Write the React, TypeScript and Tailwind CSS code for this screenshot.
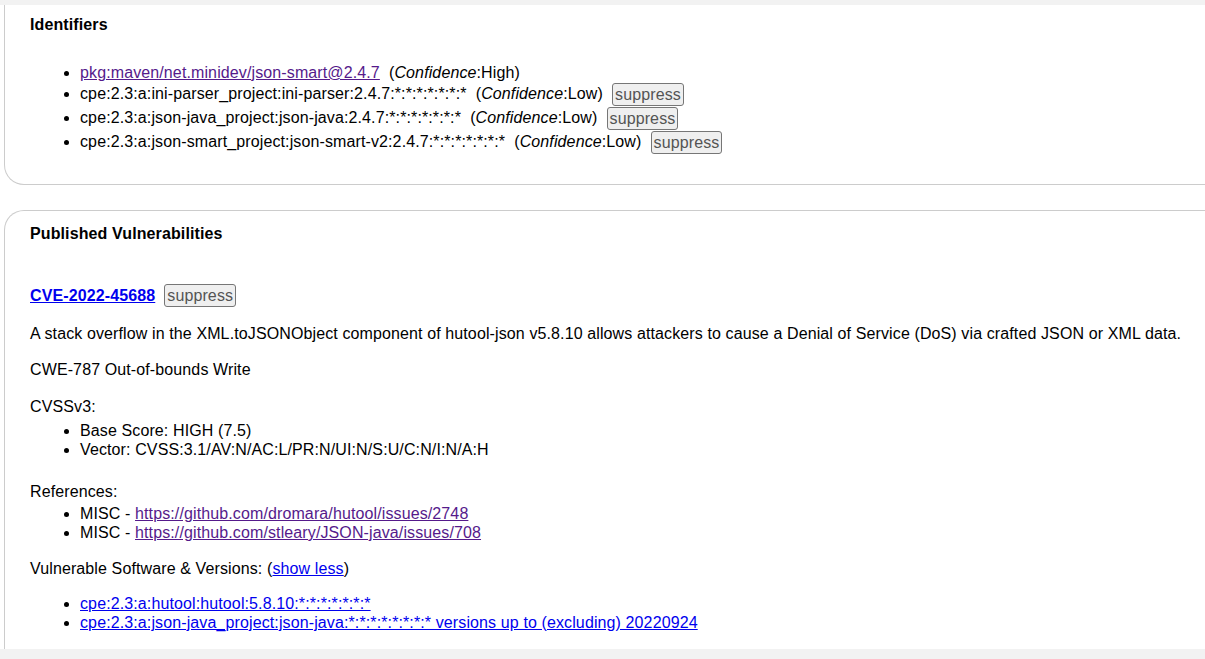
import React from 'react';

const VISITED = 'text-[#551a8b] underline';
const LINK = 'text-[#0000ee] underline';

function Suppress() {
  return (
    <button
      type="button"
      className="align-middle leading-[19px] px-[2px] py-[1px] border border-[#767676] rounded-[3px] bg-[#efefef] text-[#545454] text-[16px] tracking-[0.115px]"
    >
      suppress
    </button>
  );
}

const identifiers = [
  { text: 'cpe:2.3:a:ini-parser_project:ini-parser:2.4.7:*:*:*:*:*:*:*' },
  { text: 'cpe:2.3:a:json-java_project:json-java:2.4.7:*:*:*:*:*:*:*' },
  { text: 'cpe:2.3:a:json-smart_project:json-smart-v2:2.4.7:*:*:*:*:*:*:*' },
];

export default function App() {
  return (
    <div
      className="h-[659px] flex flex-col overflow-hidden bg-white text-black text-[16px] leading-[19px] tracking-[0.115px]"
      style={{ fontFamily: '"Liberation Sans", Arial, sans-serif' }}
    >
      <div className="h-[5px] shrink-0 bg-[#f2f2f2]" />

      <main className="flex-1 overflow-hidden">
        {/* Identifiers */}
        <section className="h-[180px] ml-[4px] -mr-[40px] border border-t-0 border-[#cccccc] rounded-bl-[20px] pl-[25px] pt-[10px]">
          <h3 className="h-[19px] font-bold">Identifiers</h3>
          <ul className="mt-[29px] pl-[50px] list-disc">
            <li className="h-[19px]">
              <a href="#" className={VISITED}>pkg:maven/net.minidev/json-smart@2.4.7</a>
              {'\u00a0\u00a0'}(<i>Confidence</i>:High)
            </li>
            {identifiers.map((id) => (
              <li key={id.text} className="h-[24px] leading-[24px]">
                {id.text}
                {'\u00a0\u00a0'}(<i>Confidence</i>:Low){'\u00a0\u00a0'}
                <Suppress />
              </li>
            ))}
          </ul>
        </section>

        {/* Published Vulnerabilities */}
        <section className="mt-[25px] ml-[4px] -mr-[40px] border border-b-0 border-[#cccccc] rounded-tl-[20px] pl-[25px] pt-[13px] pb-[40px]">
          <h3 className="h-[19px] font-bold">Published Vulnerabilities</h3>

          <div className="mt-[41px] h-[23px] flex items-center gap-[9px]">
            <a href="#" className={`${LINK} font-bold`}>CVE-2022-45688</a>
            <Suppress />
          </div>

          <p className="mt-[17px] h-[19px]">
            A stack overflow in the XML.toJSONObject component of hutool-json v5.8.10 allows attackers to cause a Denial of Service (DoS) via crafted JSON or XML data.
          </p>
          <p className="mt-[17px] h-[19px]">CWE-787 Out-of-bounds Write</p>

          <div className="mt-[18px]">CVSSv3:</div>
          <ul className="mt-[5px] pl-[50px] list-disc">
            <li>Base Score: HIGH (7.5)</li>
            <li>Vector: CVSS:3.1/AV:N/AC:L/PR:N/UI:N/S:U/C:N/I:N/A:H</li>
          </ul>

          <div className="mt-[23px]">References:</div>
          <ul className="mt-[3px] pl-[50px] list-disc">
            <li>
              MISC - <a href="#" className={VISITED}>https://github.com/dromara/hutool/issues/2748</a>
            </li>
            <li>
              MISC - <a href="#" className={VISITED}>https://github.com/stleary/JSON-java/issues/708</a>
            </li>
          </ul>

          <div className="mt-[17px]">
            Vulnerable Software &amp; Versions: (<a href="#" className={LINK}>show less</a>)
          </div>
          <ul className="mt-[16px] pl-[50px] list-disc">
            <li>
              <a href="#" className={LINK}>cpe:2.3:a:hutool:hutool:5.8.10:*:*:*:*:*:*:*</a>
            </li>
            <li>
              <a href="#" className={LINK}>
                cpe:2.3:a:json-java_project:json-java:*:*:*:*:*:*:*:* versions up to (excluding) 20220924
              </a>
            </li>
          </ul>
        </section>
      </main>

      <div className="h-[10px] shrink-0 bg-[#f2f2f2]" />
    </div>
  );
}
